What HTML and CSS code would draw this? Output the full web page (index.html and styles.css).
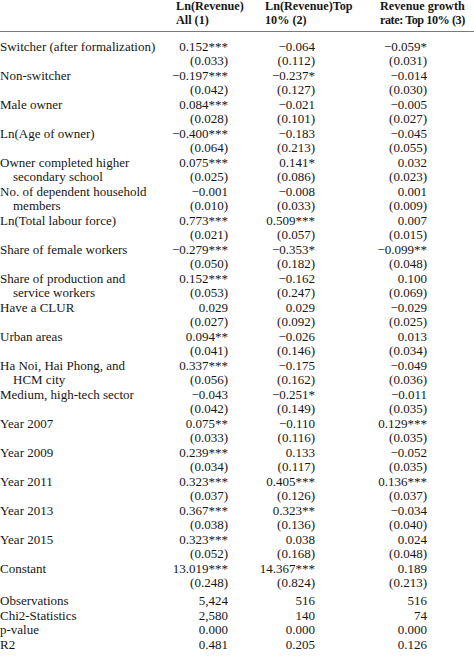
FILE: index.html
```html
<!DOCTYPE html>
<html lang="en">
<head>
<meta charset="utf-8">
<title>Regression table</title>
<link rel="stylesheet" href="styles.css">
</head>
<body>
<div class="table">
  <div class="head">
    <div class="h-label"></div>
    <div class="h-col"><span class="l1">Ln(Revenue)</span><span class="l2">All (1)</span></div>
    <div class="h-col"><span class="l1">Ln(Revenue)Top</span><span class="l2">10% (2)</span></div>
    <div class="h-col"><span class="l1">Revenue growth</span><span class="l2 tight">rate: Top 10% (3)</span></div>
  </div>
  <div class="rule"></div>
  <div class="grid body">
    <div class="label">Switcher (after formalization)</div>
    <div class="num">0.152***</div><div class="num">−0.064</div><div class="num">−0.059*</div>
    <div class="num">(0.033)</div><div class="num">(0.112)</div><div class="num">(0.031)</div>

    <div class="label">Non-switcher</div>
    <div class="num">−0.197***</div><div class="num">−0.237*</div><div class="num">−0.014</div>
    <div class="num">(0.042)</div><div class="num">(0.127)</div><div class="num">(0.030)</div>

    <div class="label">Male owner</div>
    <div class="num">0.084***</div><div class="num">−0.021</div><div class="num">−0.005</div>
    <div class="num">(0.028)</div><div class="num">(0.101)</div><div class="num">(0.027)</div>

    <div class="label">Ln(Age of owner)</div>
    <div class="num">−0.400***</div><div class="num">−0.183</div><div class="num">−0.045</div>
    <div class="num">(0.064)</div><div class="num">(0.213)</div><div class="num">(0.055)</div>

    <div class="label">Owner completed higher<br>secondary school</div>
    <div class="num">0.075***</div><div class="num">0.141*</div><div class="num">0.032</div>
    <div class="num">(0.025)</div><div class="num">(0.086)</div><div class="num">(0.023)</div>

    <div class="label">No. of dependent household<br>members</div>
    <div class="num">−0.001</div><div class="num">−0.008</div><div class="num">0.001</div>
    <div class="num">(0.010)</div><div class="num">(0.033)</div><div class="num">(0.009)</div>

    <div class="label">Ln(Total labour force)</div>
    <div class="num">0.773***</div><div class="num">0.509***</div><div class="num">0.007</div>
    <div class="num">(0.021)</div><div class="num">(0.057)</div><div class="num">(0.015)</div>

    <div class="label">Share of female workers</div>
    <div class="num">−0.279***</div><div class="num">−0.353*</div><div class="num">−0.099**</div>
    <div class="num">(0.050)</div><div class="num">(0.182)</div><div class="num">(0.048)</div>

    <div class="label">Share of production and<br>service workers</div>
    <div class="num">0.152***</div><div class="num">−0.162</div><div class="num">0.100</div>
    <div class="num">(0.053)</div><div class="num">(0.247)</div><div class="num">(0.069)</div>

    <div class="label">Have a CLUR</div>
    <div class="num">0.029</div><div class="num">0.029</div><div class="num">−0.029</div>
    <div class="num">(0.027)</div><div class="num">(0.092)</div><div class="num">(0.025)</div>

    <div class="label">Urban areas</div>
    <div class="num">0.094**</div><div class="num">−0.026</div><div class="num">0.013</div>
    <div class="num">(0.041)</div><div class="num">(0.146)</div><div class="num">(0.034)</div>

    <div class="label">Ha Noi, Hai Phong, and<br>HCM city</div>
    <div class="num">0.337***</div><div class="num">−0.175</div><div class="num">−0.049</div>
    <div class="num">(0.056)</div><div class="num">(0.162)</div><div class="num">(0.036)</div>

    <div class="label">Medium, high-tech sector</div>
    <div class="num">−0.043</div><div class="num">−0.251*</div><div class="num">−0.011</div>
    <div class="num">(0.042)</div><div class="num">(0.149)</div><div class="num">(0.035)</div>

    <div class="label">Year 2007</div>
    <div class="num">0.075**</div><div class="num">−0.110</div><div class="num">0.129***</div>
    <div class="num">(0.033)</div><div class="num">(0.116)</div><div class="num">(0.035)</div>

    <div class="label">Year 2009</div>
    <div class="num">0.239***</div><div class="num">0.133</div><div class="num">−0.052</div>
    <div class="num">(0.034)</div><div class="num">(0.117)</div><div class="num">(0.035)</div>

    <div class="label">Year 2011</div>
    <div class="num">0.323***</div><div class="num">0.405***</div><div class="num">0.136***</div>
    <div class="num">(0.037)</div><div class="num">(0.126)</div><div class="num">(0.037)</div>

    <div class="label">Year 2013</div>
    <div class="num">0.367***</div><div class="num">0.323**</div><div class="num">−0.034</div>
    <div class="num">(0.038)</div><div class="num">(0.136)</div><div class="num">(0.040)</div>

    <div class="label">Year 2015</div>
    <div class="num">0.323***</div><div class="num">0.038</div><div class="num">0.024</div>
    <div class="num">(0.052)</div><div class="num">(0.168)</div><div class="num">(0.048)</div>

    <div class="label">Constant</div>
    <div class="num">13.019***</div><div class="num">14.367***</div><div class="num">0.189</div>
    <div class="num">(0.248)</div><div class="num">(0.824)</div><div class="num">(0.213)</div>
  </div>
  <div class="grid stats">
    <div class="slabel">Observations</div>
    <div class="num">5,424</div><div class="num">516</div><div class="num">516</div>
    <div class="slabel">Chi2-Statistics</div>
    <div class="num">2,580</div><div class="num">140</div><div class="num">74</div>
    <div class="slabel">p-value</div>
    <div class="num">0.000</div><div class="num">0.000</div><div class="num">0.000</div>
    <div class="slabel">R2</div>
    <div class="num">0.481</div><div class="num">0.205</div><div class="num">0.126</div>
  </div>
</div>
</body>
</html>
```

FILE: styles.css
```css
html, body {
  margin: 0;
  padding: 0;
  background: #ffffff;
}

body {
  font-family: "Liberation Serif", "Times New Roman", serif;
  font-size: 13px;
  color: #161616;
  width: 474px;
  overflow: hidden;
}

.head {
  display: grid;
  grid-template-columns: 176px 89px 115px 94px;
  font-weight: bold;
  font-size: 12.2px;
}

.h-col {
  white-space: nowrap;
}

.l1 {
  display: block;
  line-height: 13.5px;
}

.l2 {
  display: block;
  margin-top: -1px;
  line-height: 14px;
}

.tight {
  letter-spacing: -0.45px;
}

.rule {
  margin-top: 4.5px;
  height: 0;
  border-top: 1px solid #7a7a7a;
}

.grid {
  display: grid;
  grid-template-columns: 160px 68px 87px 112px;
}

.body {
  padding-top: 7.6px;
  grid-auto-rows: 14.5px;
  line-height: 14.5px;
}

.label {
  grid-row: span 2;
  padding-left: 13px;
  text-indent: -13px;
  white-space: nowrap;
}

.num {
  text-align: right;
  white-space: nowrap;
}

.stats {
  margin-top: 3.5px;
  grid-auto-rows: 14.5px;
  line-height: 14.5px;
}

.slabel {
  white-space: nowrap;
}
```
